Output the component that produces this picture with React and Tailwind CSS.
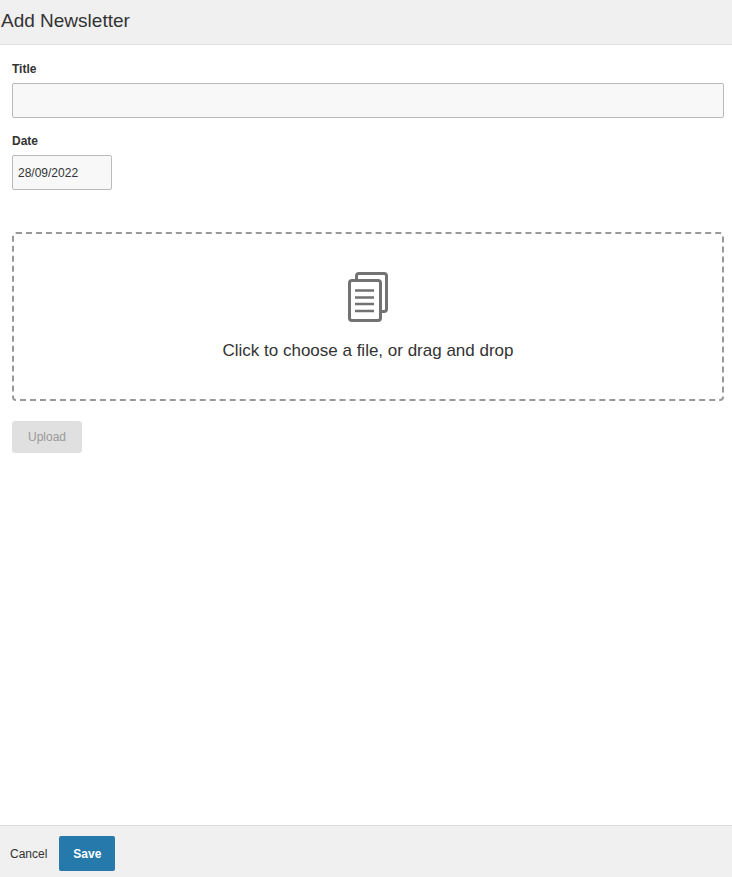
const FONT = "font-['Liberation_Sans',Arial,sans-serif]";

function DocsIcon() {
  return (
    <svg width="42" height="50" viewBox="0 0 42 50" fill="none" stroke="#727272" strokeWidth="3">
      <path d="M9.5 7V4A2.5 2.5 0 0 1 12 1.5h25A2.5 2.5 0 0 1 39.500 4v33a2.500 2.500 0 0 1-2.500 2.500h-2" />
      <rect x="2.500" y="8.500" width="31" height="40" rx="2.500" />
      <path d="M8 18.500h19M8 25.500h19M8 32h19M8 39h19" strokeWidth="2.600" />
    </svg>
  );
}

export default function App() {
  return (
    <div className={`${FONT} flex h-[877px] flex-col bg-white text-[#333]`}>
      <header className="flex h-[45px] items-center border-b border-[#ddd] bg-[#f0f0f0] pb-[3px] pl-px">
        <h1 className="text-[19px] leading-none text-[#333]">Add Newsletter</h1>
      </header>

      <main className="flex flex-1 flex-col pr-2 pl-3">
        <label className="mt-[17px] text-[12px] leading-[14px] font-bold">Title</label>
        <input className="mt-[7px] h-[35px] w-full rounded-[2px] border border-[#bbb] bg-[#f8f8f8] px-[5px] text-[12px]" />

        <label className="mt-4 text-[12px] leading-[14px] font-bold">Date</label>
        <input
          readOnly
          value="28/09/2022"
          className="mt-[7px] h-[35px] w-[100px] rounded-[2px] border border-[#bbb] bg-[#f8f8f8] px-[5px] text-[12px] text-[#333]"
        />

        <div className="mt-[42px] flex h-[169px] flex-col items-center rounded-[4px] border-2 border-dashed border-[#999] pt-[38px]">
          <DocsIcon />
          <p className="mt-[20px] text-[17px] leading-[18px] text-[#333]">Click to choose a file, or drag and drop</p>
        </div>

        <button disabled className="mt-5 h-[32px] w-[70px] rounded-[3px] bg-[#e0e0e0] text-[12px] text-[#999]">
          Upload
        </button>
      </main>

      <footer className="flex h-[52px] items-center gap-[12px] border-t border-[#ddd] bg-[#f0f0f0] pt-1 pl-[10px]">
        <button className="text-[12px] text-[#333]">Cancel</button>
        <button className="h-[35px] w-[56px] rounded-[2px] bg-[#2579ab] text-[12px] font-bold text-white">Save</button>
      </footer>
    </div>
  );
}
